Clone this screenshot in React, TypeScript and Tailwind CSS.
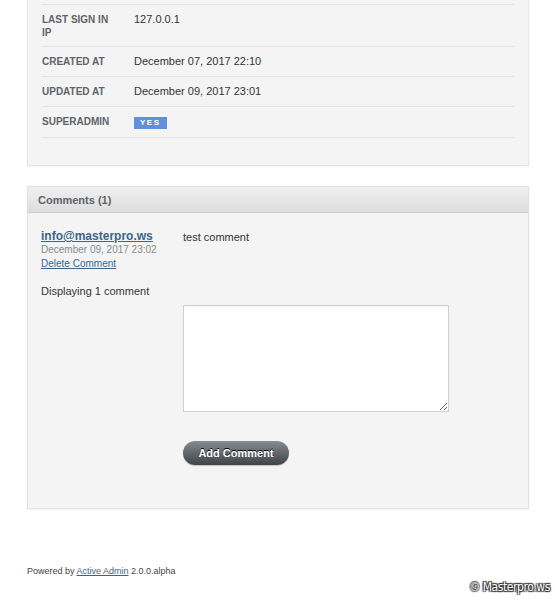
import React from 'react';

// ── Attribute rows ─────────────────────────────────────────────────────────

const ROWS: { label: React.ReactNode; value: React.ReactNode }[] = [
  { label: <>LAST SIGN IN<br />IP</>, value: '127.0.0.1' },
  { label: 'CREATED AT', value: 'December 07, 2017 22:10' },
  { label: 'UPDATED AT', value: 'December 09, 2017 23:01' },
  {
    label: 'SUPERADMIN',
    value: (
      <span className="inline-block bg-[#6090db] px-[6px] text-[8px] font-bold leading-[12px] tracking-[1.5px] text-white">
        YES
      </span>
    ),
  },
];

function AttributesPanel() {
  return (
    <div className="ml-[27px] mr-[26px] -mt-[20px] border border-[#e6e6e6] bg-[#f4f4f4] px-[14px] pb-[27px] pt-[23px] shadow-[0_1px_2px_rgba(0,0,0,0.06)]">
      <div className="border-t border-[#e4e4e4]">
        {ROWS.map((row, i) => (
          <div key={i} className={`flex border-b border-[#e4e4e4] ${i === 0 ? 'pb-[7px] pt-[8px]' : 'py-[8px]'}`}>
            <div className="w-[92px] text-[10px] font-bold leading-[13px] text-[#5e6469]">{row.label}</div>
            <div className="text-[11px] leading-[13px] text-[#323537]">{row.value}</div>
          </div>
        ))}
      </div>
    </div>
  );
}

// ── Comments panel ─────────────────────────────────────────────────────────

function CommentsPanel() {
  return (
    <div className="ml-[27px] mr-[26px] mt-[20px] border border-[#e2e2e2] bg-[#f4f4f4] shadow-[0_1px_2px_rgba(0,0,0,0.06)]">
      <h3 className="h-[26px] border-b border-[#cdcdcd] bg-gradient-to-b from-[#f0f0f0] to-[#dddddd] px-[10px] text-[11px] font-bold leading-[26px] text-[#5e6469]">
        Comments (1)
      </h3>
      <div className="px-[13px] pb-[43px] pt-[16px]">
        <div className="flex">
          <div className="w-[142px]">
            <a className="block text-[12px] font-bold leading-[14px] text-[#38678b] underline">info@masterpro.ws</a>
            <div className="text-[10px] leading-[14px] text-[#8a8a8a]">December 09, 2017 23:02</div>
            <a className="block text-[10px] leading-[14px] text-[#38678b] underline">Delete Comment</a>
          </div>
          <p className="pt-[1px] text-[11px] leading-[14px] text-[#323537]">test comment</p>
        </div>
        <p className="mt-[13px] text-[11px] leading-[14px] text-[#323537]">Displaying 1 comment</p>
        <div className="ml-[142px] mt-[7px]">
          <textarea className="block h-[107px] w-[266px] resize-y border border-[#c9d0d6] bg-white shadow-[inset_0_1px_1px_rgba(0,0,0,0.04)] outline-none" />
          <button className="mt-[29px] h-[24px] w-[106px] rounded-full bg-gradient-to-b from-[#868c92] to-[#404448] text-[11px] font-bold text-white shadow-[0_1px_1px_rgba(0,0,0,0.2)] [text-shadow:0_-1px_0_#000]">
            Add Comment
          </button>
        </div>
      </div>
    </div>
  );
}

export default function App() {
  return (
    <div className="relative h-[600px] overflow-hidden bg-white font-['Liberation_Sans',Arial,sans-serif]">
      <AttributesPanel />
      <CommentsPanel />
      <p className="ml-[27px] mt-[56px] text-[9px] text-[#444]">
        Powered by <a className="text-[#38678b] underline">Active Admin</a> 2.0.0.alpha
      </p>
      <div className="absolute bottom-[4px] right-[5px] font-['DejaVu_Sans_Condensed','DejaVu_Sans',sans-serif] text-[12px] tracking-[-0.4px] text-white [text-shadow:0_0_1px_#333,1px_1px_1px_#333,-1px_-1px_1px_#333,1px_-1px_1px_#333,-1px_1px_1px_#333]">
        © Masterpro.ws
      </div>
    </div>
  );
}
